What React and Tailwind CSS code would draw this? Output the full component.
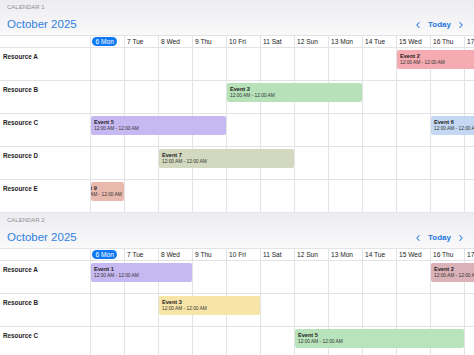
import { ChevronLeft, ChevronRight } from 'lucide-react';

const days = ['6 Mon', '7 Tue', '8 Wed', '9 Thu', '10 Fri', '11 Sat', '12 Sun', '13 Mon', '14 Tue', '15 Wed', '16 Thu', '17 Fri'];

const cellCols = [
  'col-start-2', 'col-start-3', 'col-start-4', 'col-start-5', 'col-start-6', 'col-start-7',
  'col-start-8', 'col-start-9', 'col-start-10', 'col-start-11', 'col-start-12', 'col-start-13',
];

const calendars = [
  {
    label: 'Calendar 1',
    rows: [
      { name: 'Resource A', events: [{ title: 'Event 2', col: 'col-start-11 col-span-3', bg: 'bg-[#f4abb1]' }] },
      { name: 'Resource B', events: [{ title: 'Event 3', col: 'col-start-6 col-span-4', bg: 'bg-[#b6e1b9]' }] },
      {
        name: 'Resource C',
        events: [
          { title: 'Event 5', col: 'col-start-2 col-span-4', bg: 'bg-[#c6b9f1]' },
          { title: 'Event 6', col: 'col-start-12 col-span-2', bg: 'bg-[#c4d8f3]' },
        ],
      },
      { name: 'Resource D', events: [{ title: 'Event 7', col: 'col-start-4 col-span-4', bg: 'bg-[#d3d9bf]' }] },
      { name: 'Resource E', events: [{ title: 'Event 9', col: 'col-start-2 col-span-1', bg: 'bg-[#e9b9ad]', shifted: true }] },
    ],
  },
  {
    label: 'Calendar 2',
    rows: [
      {
        name: 'Resource A',
        events: [
          { title: 'Event 1', col: 'col-start-2 col-span-3', bg: 'bg-[#c6b9f1]' },
          { title: 'Event 2', col: 'col-start-12 col-span-2', bg: 'bg-[#dcb2b9]' },
        ],
      },
      { name: 'Resource B', events: [{ title: 'Event 3', col: 'col-start-4 col-span-3', bg: 'bg-[#f7e4a7]' }] },
      { name: 'Resource C', events: [{ title: 'Event 5', col: 'col-start-8 col-span-5', bg: 'bg-[#b8e3bb]' }] },
    ],
  },
];

const gridCols = 'grid grid-cols-[90px_repeat(12,34px)] w-max';

const Calendar = ({ label, rows }) => (
  <div className="w-full overflow-hidden">
    <div className="bg-gradient-to-b from-[#ededf1] to-[#f9f9fa]">
      <div className="h-[15px] pl-[7px] flex items-center text-[6px] uppercase text-[#8d8d93]">
        {label}
      </div>
      <div className="h-[20px] pl-[7px] pr-[8px] flex items-center justify-between">
        <span className="text-[11.5px] text-[#2f7fe2] leading-none">October 2025</span>
        <div className="flex items-center text-[#2577dc]">
          <ChevronLeft size={10} strokeWidth={2.5} />
          <span className="text-[8px] font-semibold mx-[5px]">Today</span>
          <ChevronRight size={10} strokeWidth={2.5} />
        </div>
      </div>
    </div>
    <div className={`${gridCols} h-[13px] bg-white border-y border-[#e3e3e6]`}>
      <div className="col-start-1 row-start-1" />
      {days.map((d, i) => (
        <div key={d} className={`${cellCols[i]} row-start-1 border-l border-[#e3e3e6] flex items-center text-[6.6px] text-[#222]`}>
          {i === 0 ? (
            <span className="ml-[1px] h-[9px] px-[3.5px] rounded-full bg-[#1079f4] text-white flex items-center">{d}</span>
          ) : (
            <span className="pl-[2px]">{d}</span>
          )}
        </div>
      ))}
    </div>
    {rows.map((r) => (
      <div key={r.name} className={`${gridCols} h-[33px] bg-white border-b border-[#e3e3e6]`}>
        <div className="col-start-1 row-start-1 pl-[3px] pt-[5px] text-[6.3px] font-bold text-[#1c1c1e] leading-[7px]">
          {r.name}
        </div>
        {days.map((d, i) => (
          <div key={d} className={`${cellCols[i]} row-start-1 border-l border-[#e3e3e6]`} />
        ))}
        {r.events.map((e) => (
          <div key={e.title} className={`${e.col} row-start-1 self-start ml-px mt-[2px] h-[19px] rounded-[2px] overflow-hidden ${e.bg}`}>
            <div className={`pt-[3px] whitespace-nowrap ${e.shifted ? 'pl-[3px] -ml-[17px]' : 'pl-[3px]'}`}>
              <div className="text-[5.6px] font-bold text-[#222] leading-[6px]">{e.title}</div>
              <div className="text-[4.8px] text-[#333] leading-[7px]">12:00 AM - 12:00 AM</div>
            </div>
          </div>
        ))}
      </div>
    ))}
  </div>
);

export default function App() {
  return (
    <div className="w-[474px] h-[355px] overflow-hidden bg-[#efeff3] font-['Liberation_Sans',Arial,sans-serif]">
      {calendars.map((c) => (
        <Calendar key={c.label} {...c} />
      ))}
    </div>
  );
}
